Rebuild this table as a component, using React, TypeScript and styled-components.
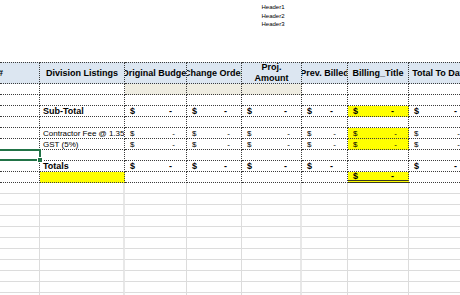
import React from "react";
import styled, { createGlobalStyle } from "styled-components";

const GlobalStyle = createGlobalStyle`
  html, body {
    margin: 0;
    padding: 0;
    background: #fff;
  }
  body {
    font-family: "Liberation Sans", Arial, sans-serif;
    color: #000;
  }
`;

// column widths A..H (H runs past the window edge)
const COLS = [40, 85, 62, 55, 60, 46, 61, 63];
const HAIR = "1px dotted #3c3c3c";
const GRID = "#dcdcdc";

const Page = styled.div`
  width: 460px;
  height: 295px;
  overflow: hidden;
  background: #fff;
`;

const PrintHeader = styled.div`
  height: 62px;
  box-sizing: border-box;
  padding: 3px 0 0 86px;
  display: flex;
  flex-direction: column;
  align-items: center;
  font-size: 6px;
  line-height: 8.5px;
  color: #000;
`;

const Sheet = styled.div`
  width: 472px;
  display: grid;
  grid-template-columns: ${COLS.map((c) => c + "px").join(" ")};
`;

const Cell = styled.div<{ $bg?: string; $grid?: boolean; $wide?: boolean }>`
  position: relative;
  box-sizing: border-box;
  height: 11px;
  min-width: 0;
  overflow: hidden;
  white-space: nowrap;
  display: flex;
  align-items: center;
  background: ${(p) => p.$bg ?? "transparent"};
  border-right: ${(p) =>
    p.$grid ? (p.$wide ? "2px solid #e8e8e8" : `1px solid ${GRID}`) : HAIR};
  border-bottom: ${(p) => (p.$grid ? `1px solid ${GRID}` : HAIR)};
`;

const HeadCell = styled(Cell)<{ $left?: boolean }>`
  height: 22px;
  border-top: ${HAIR};
  background: #dce6f1;
  justify-content: ${(p) => (p.$left ? "flex-start" : "center")};
  text-align: center;
  font-size: 9px;
  font-weight: bold;
  line-height: 11px;
`;

const Hash = styled.span`
  margin-left: -2px;
`;

const LabelCell = styled(Cell)<{ $bold?: boolean }>`
  padding-left: 3px;
  font-size: ${(p) => (p.$bold ? "9px" : "8px")};
  font-weight: ${(p) => (p.$bold ? "bold" : "normal")};
`;

const MoneyCell = styled(Cell)<{ $bold?: boolean; $dbl?: boolean }>`
  justify-content: space-between;
  padding: 0 ${(p) => (p.$bold ? 14 : 11)}px 0 5px;
  font-size: ${(p) => (p.$bold ? "9px" : "8px")};
  font-weight: ${(p) => (p.$bold ? "bold" : "normal")};
  ${(p) => (p.$dbl ? "border-bottom: 3px double #3a3a20;" : "")}
`;

const SelectedCell = styled(Cell)`
  overflow: visible;
  z-index: 1;
`;

const Selection = styled.div`
  position: absolute;
  left: -4px;
  top: -1px;
  right: -2px;
  bottom: -1px;
  border: 2px solid #217346;
  pointer-events: none;

  &::after {
    content: "";
    position: absolute;
    right: -4px;
    bottom: -4px;
    width: 6px;
    height: 6px;
    box-sizing: border-box;
    background: #217346;
    border: 1px solid #fff;
  }
`;

type Money = { bold?: boolean; hi?: boolean; dbl?: boolean } | null;
type Row = {
  label?: string;
  boldLabel?: boolean;
  labelHi?: boolean;
  beige?: boolean;
  selected?: boolean;
  money: Money[];
};

const B: Money = { bold: true };
const P: Money = {};
const NONE: Money[] = [null, null, null, null, null, null];

const HEADERS = [
  "Division Listings",
  "Original Budget",
  "Change Order",
  "Proj.|Amount",
  "Prev. Billed",
  "Billing_Title",
  "Total To Date",
];

const ROWS: Row[] = [
  { beige: true, money: NONE },
  { money: NONE },
  { label: "Sub-Total", boldLabel: true, money: [B, B, B, B, { bold: true, hi: true }, B] },
  { money: NONE },
  { label: "Contractor Fee @ 1.35%", money: [P, P, P, P, { hi: true }, P] },
  { label: "GST (5%)", money: [P, P, P, P, { hi: true }, P] },
  { selected: true, money: NONE },
  { label: "Totals", boldLabel: true, money: [B, B, B, B, null, B] },
  { labelHi: true, money: [null, null, null, null, { bold: true, hi: true, dbl: true }, null] },
];

const YELLOW = "#ffff00";
const BEIGE = "#eeece1";

const App: React.FC = () => {
  return (
    <Page>
      <GlobalStyle />
      <PrintHeader>
        <div>Header1</div>
        <div>Header2</div>
        <div>Header3</div>
      </PrintHeader>

      <Sheet>
        <HeadCell $left>
          <Hash>#</Hash>
        </HeadCell>
        {HEADERS.map((h) => (
          <HeadCell key={h}>
            <span>
              {h.split("|").map((part, i) => (
                <React.Fragment key={i}>
                  {i > 0 && <br />}
                  {part}
                </React.Fragment>
              ))}
            </span>
          </HeadCell>
        ))}

        {ROWS.map((row, r) => (
          <React.Fragment key={r}>
            {row.selected ? (
              <SelectedCell>
                <Selection />
              </SelectedCell>
            ) : (
              <Cell />
            )}
            <LabelCell $bold={row.boldLabel} $bg={row.labelHi ? YELLOW : undefined}>
              {row.label}
            </LabelCell>
            {row.money.map((m, c) => {
              const bg = m?.hi ? YELLOW : row.beige && c < 3 ? BEIGE : undefined;
              return m ? (
                <MoneyCell key={c} $bold={m.bold} $dbl={m.dbl} $bg={bg}>
                  <span>$</span>
                  <span>-</span>
                </MoneyCell>
              ) : (
                <Cell key={c} $bg={bg} />
              );
            })}
          </React.Fragment>
        ))}

        {Array.from({ length: 11 }).map((_, r) => (
          <React.Fragment key={"e" + r}>
            {COLS.map((_, c) => (
              <Cell key={c} $grid $wide={c === 1 || c === 4} />
            ))}
          </React.Fragment>
        ))}
      </Sheet>
    </Page>
  );
};

export default App;
